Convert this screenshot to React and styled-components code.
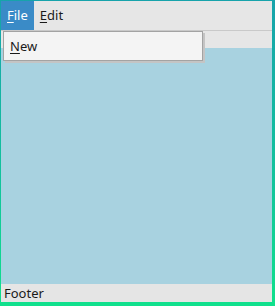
import React from "react";
import styled, { createGlobalStyle } from "styled-components";

const Global = createGlobalStyle`
html, body {
margin: 0;
padding: 0;
}
body {
font-family: "Noto Sans", "Open Sans", sans-serif;
font-size: 13px;
}
`;

const Frame = styled.div`
position: relative;
box-sizing: border-box;
width: 275px;
height: 306px;
display: flex;
flex-direction: column;
border-style: solid;
border-width: 1px 3px 4px 1px;
border-image: linear-gradient(180deg, #17a3ab 0%, #12c49c 60%, #10e08c 100%) 1;
background: #e6e6e6;
`;

const MenuBar = styled.div`
display: flex;
height: 29px;
border-bottom: 1px solid #c9c9c9;
background: #e6e6e6;
`;

const MenuItem = styled.div`
display: flex;
align-items: center;
padding: 0 6px 2px 6px;
color: ${(p) => (p.$active ? "#ffffff" : "#1a1a1a")};
background: ${(p) => (p.$active ? "#3a8bc7" : "transparent")};
`;

const Mnemonic = styled.span`
text-decoration: underline;
text-underline-offset: 2px;
`;

const ToolStrip = styled.div`
height: 17px;
background: #e6e6e6;
`;

const Content = styled.div`
flex: 1;
background: #a8d2e0;
`;

const Footer = styled.div`
height: 18px;
display: flex;
align-items: center;
padding-left: 3px;
background: #e5e5e5;
color: #1a1a1a;
`;

const Dropdown = styled.div`
position: absolute;
left: 2px;
top: 30px;
box-sizing: border-box;
width: 200px;
height: 30px;
display: flex;
align-items: center;
padding-left: 6px;
background: #f4f4f4;
border: 1px solid #a3a3a3;
box-shadow: 2px 2px 0 #c4c4c4;
color: #1a1a1a;
`;

export default function App() {
return (
	<>
		<Global />
		<Frame>
			<MenuBar>
				<MenuItem $active>
					<span><Mnemonic>F</Mnemonic>ile</span>
				</MenuItem>
				<MenuItem>
					<span><Mnemonic>E</Mnemonic>dit</span>
				</MenuItem>
			</MenuBar>
			<ToolStrip />
			<Content />
			<Footer>Footer</Footer>
			<Dropdown>
				<span><Mnemonic>N</Mnemonic>ew</span>
			</Dropdown>
		</Frame>
	</>
);
}
